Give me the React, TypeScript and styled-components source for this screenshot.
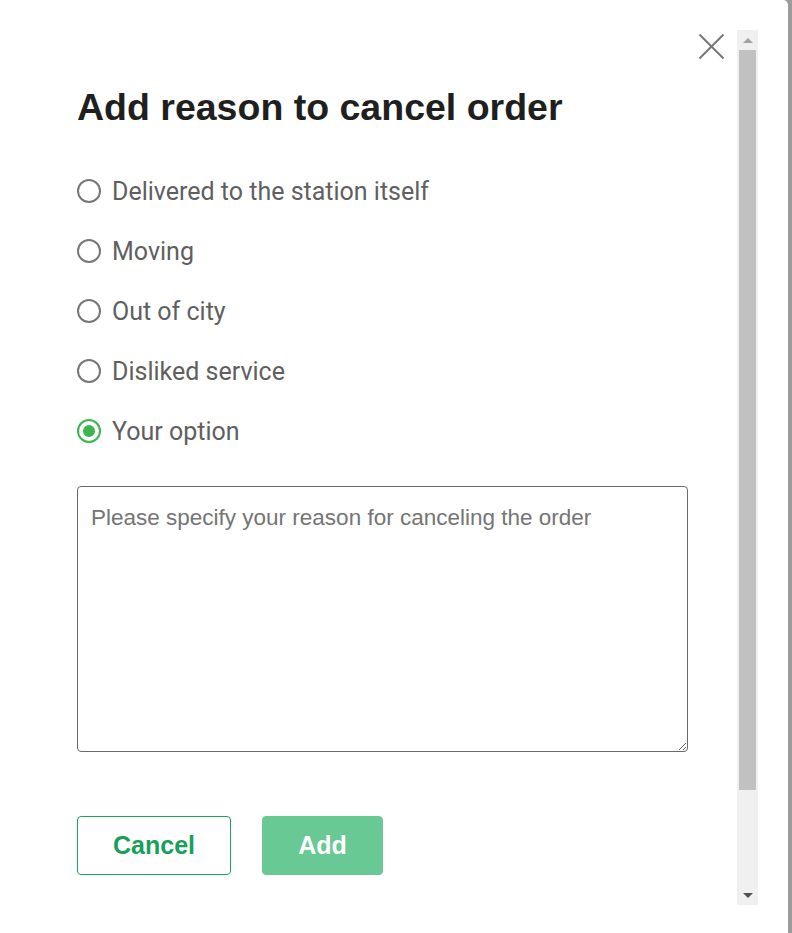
import React, { useState } from 'react';
import styled, { createGlobalStyle } from 'styled-components';

const GlobalStyle = createGlobalStyle`
  html, body {
    margin: 0;
    padding: 0;
    background: #9c9c9c;
  }
  * {
    box-sizing: border-box;
  }
`;

const reasons = [
  'Delivered to the station itself',
  'Moving',
  'Out of city',
  'Disliked service',
  'Your option',
];

const Page = styled.div`
  width: 792px;
  height: 933px;
  overflow: hidden;
  display: flex;
`;

const Modal = styled.div`
  position: relative;
  width: 788px;
  height: 933px;
  background: #ffffff;
  border-top-right-radius: 5px;
  display: flex;
  padding-top: 30px;
`;

const Content = styled.div`
  flex: 1;
  padding-left: 77px;
  display: flex;
  flex-direction: column;
`;

const Title = styled.h2`
  margin: 55px 0 50px;
  font-family: 'Liberation Sans', Arial, sans-serif;
  font-weight: 700;
  font-size: 37.5px;
  line-height: 44px;
  color: #1f1f1f;
`;

const RadioList = styled.div`
  display: flex;
  flex-direction: column;
  gap: 36px;
`;

const RadioRow = styled.label`
  display: flex;
  align-items: center;
  gap: 11px;
  height: 24px;
  cursor: pointer;
  font-family: Roboto, 'Open Sans', sans-serif;
  font-size: 25px;
  color: #5f5f5f;
`;

const Circle = styled.span<{ $checked: boolean }>`
  width: 24px;
  height: 24px;
  border-radius: 50%;
  border: 2px solid ${(p) => (p.$checked ? '#3cb550' : '#777777')};
  display: flex;
  align-items: center;
  justify-content: center;
  flex-shrink: 0;

  &::after {
    content: '';
    width: 12px;
    height: 12px;
    border-radius: 50%;
    background: ${(p) => (p.$checked ? '#3cb550' : 'transparent')};
  }
`;

const Textarea = styled.textarea`
  margin-top: 43px;
  width: 611px;
  height: 266px;
  border: 1px solid #6a6a6a;
  border-radius: 4px;
  padding: 18px 13px;
  font-family: 'Liberation Sans', Arial, sans-serif;
  font-size: 22.5px;
  color: #333;
  resize: vertical;
  outline: none;

  &::placeholder {
    color: #757575;
  }
`;

const Actions = styled.div`
  display: flex;
  gap: 31px;
  margin-top: 64px;
`;

const Button = styled.button<{ $primary?: boolean }>`
  height: 59px;
  width: ${(p) => (p.$primary ? '121px' : '154px')};
  border-radius: 4px;
  border: 1px solid ${(p) => (p.$primary ? '#68c994' : '#1ba45b')};
  background: ${(p) => (p.$primary ? '#68c994' : '#ffffff')};
  color: ${(p) => (p.$primary ? '#ffffff' : '#17a05a')};
  font-family: 'Liberation Sans', Arial, sans-serif;
  font-weight: 700;
  font-size: 25px;
  cursor: pointer;
`;

const Close = styled.button`
  position: absolute;
  top: 33px;
  left: 698px;
  width: 27px;
  height: 27px;
  padding: 0;
  border: none;
  background: transparent;
  cursor: pointer;
  display: flex;
`;

const Scrollbar = styled.div`
  width: 21px;
  height: 875px;
  margin-right: 30px;
  background: #f0f0f0;
  display: flex;
  flex-direction: column;
  align-items: center;
`;

const Arrow = styled.div<{ $down?: boolean; $dim?: boolean }>`
  height: 20px;
  width: 100%;
  display: flex;
  align-items: center;
  justify-content: center;

  &::before {
    content: '';
    width: 0;
    height: 0;
    border-left: 5px solid transparent;
    border-right: 5px solid transparent;
    ${(p) =>
      p.$down
        ? `border-top: 5px solid ${p.$dim ? '#a3a3a3' : '#505050'};`
        : `border-bottom: 5px solid ${p.$dim ? '#a3a3a3' : '#505050'};`}
  }
`;

const Thumb = styled.div`
  width: 17px;
  height: 740px;
  background: #c1c1c1;
`;

const Spacer = styled.div`
  flex: 1;
`;

export default function App() {
  const [selected, setSelected] = useState(4);

  return (
    <>
      <GlobalStyle />
      <Page>
        <Modal>
          <Close aria-label="Close">
            <svg width="27" height="27" viewBox="0 0 27 27">
              <path d="M1.5 1.5 L25.5 25.5 M25.5 1.5 L1.5 25.5" stroke="#777" strokeWidth="2" />
            </svg>
          </Close>
          <Content>
            <Title>Add reason to cancel order</Title>
            <RadioList>
              {reasons.map((r, i) => (
                <RadioRow key={r} onClick={() => setSelected(i)}>
                  <Circle $checked={selected === i} />
                  {r}
                </RadioRow>
              ))}
            </RadioList>
            <Textarea placeholder="Please specify your reason for canceling the order" />
            <Actions>
              <Button>Cancel</Button>
              <Button $primary>Add</Button>
            </Actions>
          </Content>
          <Scrollbar>
            <Arrow $dim />
            <Thumb />
            <Spacer />
            <Arrow $down />
          </Scrollbar>
        </Modal>
      </Page>
    </>
  );
}
